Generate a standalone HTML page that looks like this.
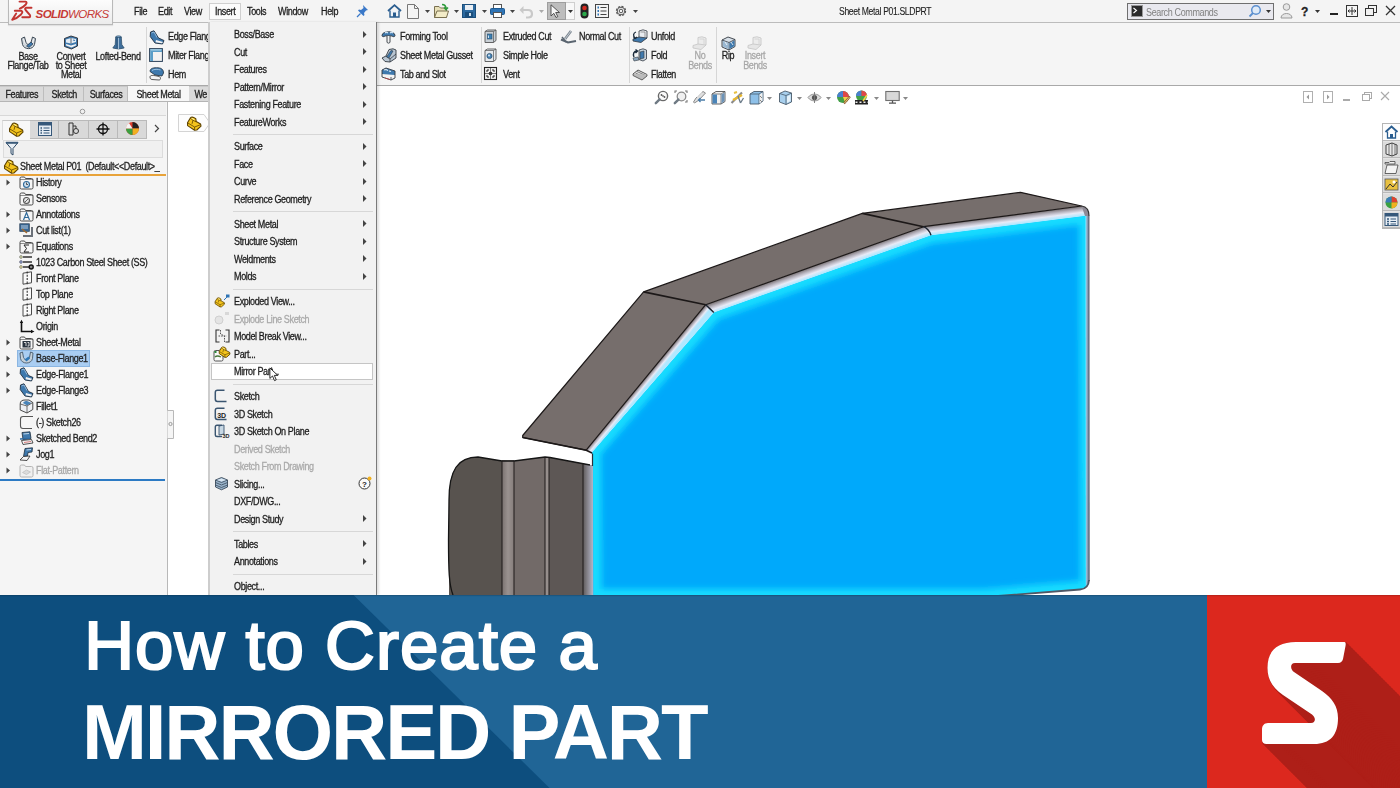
<!DOCTYPE html><html><head><meta charset="utf-8"><style>
html,body{margin:0;padding:0;}
body{width:1400px;height:788px;overflow:hidden;position:relative;background:#fff;font-family:"Liberation Sans", sans-serif;}
.t{position:absolute;white-space:nowrap;line-height:14px;height:14px;-webkit-text-stroke:0.28px currentColor;}
.s{transform:scaleX(0.9);transform-origin:0 50%;letter-spacing:-0.4px;}
.sc{transform:scaleX(0.9);transform-origin:50% 50%;letter-spacing:-0.4px;}
.b{position:absolute;box-sizing:border-box;}
svg{position:absolute;overflow:visible;}
</style></head><body>
<div class="b" style="left:0px;top:0px;width:1400px;height:23px;background:#f4f4f4;border-bottom:1px solid #bcbcbc;"></div>
<div class="b" style="left:0px;top:23px;width:1400px;height:63px;background:#f5f5f5;border-bottom:1px solid #a9a9a9;"></div>
<div class="b" style="left:167px;top:86px;width:1233px;height:509px;background:#ffffff;"></div>
<div class="b" style="left:0px;top:101px;width:168px;height:494px;background:#f5f5f5;border-right:1px solid #b8b8b8;"></div>
<div class="b" style="left:7.5px;top:-1px;width:105px;height:26px;background:linear-gradient(#fdfdfd,#ececec);border:1px solid #b9b9b9;border-top:none;box-shadow:0 1px 1px rgba(0,0,0,0.08);"></div>
<div class="t" style="left:35.5px;top:7.2px;font-size:11.6px;line-height:14px;color:#c63a36;font-style:italic;letter-spacing:-0.6px;-webkit-text-stroke:0;"><b>SOLID</b>WORKS</div>
<svg style="left:0px;top:0px" width="40" height="24" viewBox="0 0 40 24"><g stroke="#c23430" fill="none" stroke-linecap="round" stroke-linejoin="round"><path d="M19.5 1.6 L25.5 1.6 Q27.5 2 25.8 4.5 Q23.5 7 19.8 8.6" stroke-width="1.9"/><path d="M14.8 10.8 L21.5 10.8 Q23.5 11.5 21 14.5 Q17 18.5 12.2 19.8 L16.2 13.6" stroke-width="1.9"/><path d="M31.5 7.8 L25.8 7.8 Q24.5 8.3 25.6 10 L29.8 14.8 Q31 17 28.8 17.3 L22.3 17.3" stroke-width="1.9"/></g></svg>
<div class="b" style="left:208.5px;top:3px;width:32px;height:17px;background:#fbfbfb;border:1px solid #cfcfcf;"></div>
<div class="t s" style="left:133.5px;top:5.2px;font-size:10px;color:#1e1e1e;font-weight:normal;">File</div>
<div class="t s" style="left:158px;top:5.2px;font-size:10px;color:#1e1e1e;font-weight:normal;">Edit</div>
<div class="t s" style="left:184px;top:5.2px;font-size:10px;color:#1e1e1e;font-weight:normal;">View</div>
<div class="t s" style="left:214.5px;top:5.2px;font-size:10px;color:#1e1e1e;font-weight:normal;">Insert</div>
<div class="t s" style="left:247px;top:5.2px;font-size:10px;color:#1e1e1e;font-weight:normal;">Tools</div>
<div class="t s" style="left:278px;top:5.2px;font-size:10px;color:#1e1e1e;font-weight:normal;">Window</div>
<div class="t s" style="left:321px;top:5.2px;font-size:10px;color:#1e1e1e;font-weight:normal;">Help</div>
<svg style="left:356px;top:4px" width="13" height="14" viewBox="0 0 13 14"><path d="M7 1 L12 6 L10 6.5 L8 9 L8.5 11 L7.5 12 L2 6.5 L3 5.5 L5 6 L7.5 4 Z" fill="#3a78c8"/><path d="M4.5 9.5 L1 13" stroke="#3a78c8" stroke-width="1.3"/></svg>
<div class="t s" style="left:839px;top:5.0px;font-size:10px;color:#222;font-weight:normal;-webkit-text-stroke:0.1px #222;transform:scaleX(0.86);">Sheet Metal P01.SLDPRT</div>
<div class="b" style="left:1126.5px;top:3px;width:147px;height:17px;background:#e9e9ef;border:1px solid #6f6f6f;"></div>
<div class="b" style="left:1130.5px;top:5px;width:12px;height:12px;background:#2b2b2b;border:1px solid #999;"></div>
<svg style="left:1132px;top:7px" width="9" height="8"><path d="M1.5 1 L4.5 3.5 L1.5 6" stroke="#fff" stroke-width="1.1" fill="none"/></svg>
<div class="t s" style="left:1146px;top:5.5px;font-size:10px;color:#808080;font-weight:normal;-webkit-text-stroke:0;">Search Commands</div>
<svg style="left:1248px;top:4px" width="14" height="14" viewBox="0 0 14 14"><circle cx="8" cy="6" r="4.3" stroke="#5b8fcf" stroke-width="1.5" fill="#dfeaf7"/><path d="M5 9 L1.5 12.5" stroke="#5b8fcf" stroke-width="1.8"/></svg>
<svg style="left:1266px;top:10px" width="6" height="4"><path d="M0 0 H5 L2.5 3 Z" fill="#333"/></svg>
<svg style="left:1280px;top:2px" width="13" height="17" viewBox="0 0 13 17"><circle cx="6.5" cy="5" r="3.3" fill="#e6e6e6" stroke="#9a9a9a"/><path d="M1 16 C1 10 12 10 12 16 Z" fill="#e6e6e6" stroke="#9a9a9a"/></svg>
<div class="t " style="left:1301px;top:5.0px;font-size:12px;color:#222;font-weight:bold;">?</div>
<svg style="left:1315px;top:10px" width="6" height="4"><path d="M0 0 H5 L2.5 3 Z" fill="#333"/></svg>
<div class="b" style="left:1330px;top:13px;width:8px;height:2px;background:#222;"></div>
<div class="b" style="left:1346px;top:5px;width:12px;height:12px;border:1px solid #333;"></div>
<svg style="left:1347px;top:6px" width="10" height="10"><path d="M5 1 V9" stroke="#333"/><path d="M1.5 5 H8.5 M2.5 3.5 L1 5 L2.5 6.5 M7.5 3.5 L9 5 L7.5 6.5" stroke="#333" fill="none"/></svg>
<svg style="left:1365px;top:5px" width="12" height="12"><rect x="3.5" y="0.5" width="8" height="7" fill="none" stroke="#333"/><rect x="0.5" y="3.5" width="8" height="7" fill="#f1f1f1" stroke="#333"/></svg>
<svg style="left:1385px;top:5px" width="11" height="11"><path d="M1 1 L10 10 M10 1 L1 10" stroke="#333" stroke-width="1.3"/></svg>
<svg style="left:387px;top:4px" width="15" height="14" viewBox="0 0 15 14"><path d="M1 7 L7.5 1.2 L14 7" stroke="#2a5d8f" stroke-width="1.8" fill="none"/><path d="M3 6.5 V13 H12 V6.5" stroke="#2a5d8f" stroke-width="1.4" fill="#eef3f8"/><rect x="6" y="8.5" width="3" height="4.5" fill="#2a5d8f"/></svg>
<svg style="left:407px;top:4px" width="12" height="15" viewBox="0 0 12 15"><path d="M0.5 0.5 H7.5 L11.5 4.5 V14.5 H0.5 Z" fill="#f4f4f4" stroke="#777"/><path d="M7.5 0.5 V4.5 H11.5" fill="none" stroke="#777"/></svg>
<svg style="left:425px;top:10px" width="5" height="3"><path d="M0 0 H5 L2.5 3 Z" fill="#444"/></svg>
<svg style="left:434px;top:4px" width="15" height="14" viewBox="0 0 15 14"><path d="M0.5 2.5 H5 L6.5 4 H12.5 V13.5 H0.5 Z" fill="#e8e0b8" stroke="#7a7050"/><path d="M0.5 13.5 L3 7 H14.5 L12.5 13.5 Z" fill="#f3ecc8" stroke="#7a7050"/><path d="M8 0.5 C11 0.5 12 2 12 5 M10 3.5 L12 5.5 L14 3.5" stroke="#2e9a3a" stroke-width="1.6" fill="none"/></svg>
<svg style="left:454px;top:10px" width="5" height="3"><path d="M0 0 H5 L2.5 3 Z" fill="#444"/></svg>
<svg style="left:462px;top:4px" width="14" height="14" viewBox="0 0 14 14"><rect x="0.5" y="0.5" width="13" height="13" fill="#2d6aa0" stroke="#1c4f7c"/><rect x="3" y="1" width="8" height="5" fill="#e9eef3"/><rect x="3" y="8" width="8" height="5.5" fill="#1c4f7c"/><rect x="7" y="9" width="2" height="3" fill="#cfe0ef"/></svg>
<svg style="left:482px;top:10px" width="5" height="3"><path d="M0 0 H5 L2.5 3 Z" fill="#444"/></svg>
<svg style="left:490px;top:4px" width="15" height="14" viewBox="0 0 15 14"><rect x="3.5" y="0.5" width="8" height="4" fill="#fff" stroke="#555"/><rect x="0.5" y="4.5" width="14" height="6" rx="1" fill="#2f74b5" stroke="#1e5a92"/><rect x="3.5" y="8.5" width="8" height="5" fill="#fff" stroke="#555"/></svg>
<svg style="left:510px;top:10px" width="5" height="3"><path d="M0 0 H5 L2.5 3 Z" fill="#444"/></svg>
<svg style="left:519px;top:5px" width="14" height="13" viewBox="0 0 14 13"><path d="M2 5 H9 C12 5 13 7 13 9 C13 11 11.5 12.5 9 12.5 H7" stroke="#c9c9c9" stroke-width="2.2" fill="none"/><path d="M0.5 5 L4.5 1 V9 Z" fill="#c9c9c9"/></svg>
<svg style="left:539px;top:10px" width="5" height="3"><path d="M0 0 H5 L2.5 3 Z" fill="#aaa"/></svg>
<div class="b" style="left:546.5px;top:2px;width:28px;height:18px;background:#f8f8f8;border:1px solid #cfcfcf;"></div>
<div class="b" style="left:546.5px;top:2px;width:19px;height:18px;background:#bdbdbd;border:1px solid #9e9e9e;"></div>
<svg style="left:550px;top:4px" width="11" height="14" viewBox="0 0 11 14"><path d="M1 0.8 V12 L3.8 9.3 L6 13.5 L7.8 12.6 L5.7 8.5 L9.5 8.5 Z" fill="#f7f7f7" stroke="#444" stroke-width="0.9" stroke-linejoin="round"/></svg>
<svg style="left:567.5px;top:10px" width="5" height="3"><path d="M0 0 H5 L2.5 3 Z" fill="#333"/></svg>
<svg style="left:580px;top:3px" width="9" height="16" viewBox="0 0 9 16"><rect x="0.5" y="0.5" width="8" height="15" rx="4" fill="#222"/><circle cx="4.5" cy="5" r="2.3" fill="#d32c22"/><circle cx="4.5" cy="11" r="2.3" fill="#2aa84a"/></svg>
<svg style="left:595px;top:4px" width="14" height="14" viewBox="0 0 14 14"><rect x="0.5" y="0.5" width="13" height="13" fill="#f4f4f4" stroke="#444"/><path d="M2.5 3.5 H4 M2.5 7 H4 M2.5 10.5 H4" stroke="#2f74b5" stroke-width="1.8"/><path d="M5.5 3.5 H11.5 M5.5 7 H11.5 M5.5 10.5 H11.5" stroke="#444" stroke-width="1.2"/></svg>
<svg style="left:614px;top:4px" width="14" height="14" viewBox="0 0 14 14"><circle cx="7" cy="7" r="4.6" fill="none" stroke="#555" stroke-width="1.1" stroke-dasharray="2.2 1.4"/><circle cx="7" cy="7" r="3.8" fill="none" stroke="#555" stroke-width="1"/><circle cx="7" cy="7" r="1.8" fill="none" stroke="#555" stroke-width="1"/></svg>
<svg style="left:633px;top:10px" width="5" height="3"><path d="M0 0 H5 L2.5 3 Z" fill="#444"/></svg>
<svg style="left:20px;top:35.5px" width="17" height="15" viewBox="0 0 17 15"><path d="M1.5 2.5 L4.5 1 L6 6.5 C7 9 10 9 11 6.5 L12.5 1 L15.5 2.5 L14.5 8.5 C13 14 4 14 2.5 8.5 Z" fill="#d0d6dc" stroke="#3e4a56" stroke-width="1" stroke-linejoin="round"/><path d="M6.5 10 L11 6 L13 8 L9 11.5 Z" fill="#3f79ad" stroke="#1e2e3e" stroke-width="0.6"/><path d="M3.5 3 L5 7.5 M13.5 3 L12.5 7" stroke="#f8f8f8" stroke-width="0.8"/></svg>
<div class="t sc" style="left:-32px;width:120px;text-align:center;top:49.5px;font-size:10px;color:#1e1e1e;">Base</div>
<div class="t sc" style="left:-32px;width:120px;text-align:center;top:58.5px;font-size:10px;color:#1e1e1e;">Flange/Tab</div>
<svg style="left:63px;top:35px" width="16" height="15" viewBox="0 0 16 15"><path d="M1.5 3.5 L8 1 L14.5 3 V11 L8.5 14 L1.5 11.5 Z" fill="#3f79ad" stroke="#2a2e34" stroke-width="0.9" stroke-linejoin="round"/><path d="M3 4.5 L8 3 L13 4 V7 L8 8.5 L3 7.5 Z" fill="#e4ecf4"/><path d="M3 9 L8 10.5 L13 9 L13 10.5 L8.5 12.5 L3 10.5 Z" fill="#f2f2f2"/><path d="M8 3 V8.5" stroke="#2a2e34" stroke-width="0.7"/><path d="M10 5 L12 5.5" stroke="#3f79ad" stroke-width="1.2"/></svg>
<div class="t sc" style="left:11px;width:120px;text-align:center;top:49.5px;font-size:10px;color:#1e1e1e;">Convert</div>
<div class="t sc" style="left:11px;width:120px;text-align:center;top:58.5px;font-size:10px;color:#1e1e1e;">to Sheet</div>
<div class="t sc" style="left:11px;width:120px;text-align:center;top:67.5px;font-size:10px;color:#1e1e1e;">Metal</div>
<svg style="left:111.5px;top:35px" width="13" height="15" viewBox="0 0 13 15"><ellipse cx="6.5" cy="2" rx="2.8" ry="1.2" fill="#7aa4c8" stroke="#2a4a66" stroke-width="0.6"/><path d="M3.7 2 L3.2 9.5 L0.8 13 Q6.5 15 12.2 13 L9.8 9.5 L9.3 2 Q6.5 3.5 3.7 2 Z" fill="#3f6f9c" stroke="#2a4a66" stroke-width="0.7"/><path d="M6.5 3 V14" stroke="#b8d0e4" stroke-width="0.8"/><path d="M5 3 V13" stroke="#1e3a56" stroke-width="0.5"/></svg>
<div class="t sc" style="left:58px;width:120px;text-align:center;top:49.5px;font-size:10px;color:#1e1e1e;">Lofted-Bend</div>
<div class="b" style="left:146px;top:27px;width:1px;height:56px;background:#d6d6d6;"></div>
<svg style="left:149px;top:29.5px" width="16" height="15" viewBox="0 0 16 15"><path d="M1.5 2 L5 0.8 L9.5 8 L15 10.5 L13.5 14 L6 13 L1.2 6.5 Z" fill="#3f79ad" stroke="#1e2e3e" stroke-width="0.9" stroke-linejoin="round"/><path d="M2.5 3 L5 2 L8 7.5" stroke="#9cc0e0" stroke-width="0.9" fill="none"/><path d="M7 10 L14 12 L13 13.2 L6.5 12.3 Z" fill="#f4f4f4"/></svg>
<div class="t s" style="left:168px;top:30.3px;font-size:10px;color:#1e1e1e;font-weight:normal;">Edge Flange</div>
<svg style="left:149px;top:48px" width="14" height="14" viewBox="0 0 14 14"><rect x="0.6" y="0.6" width="12.8" height="12.8" fill="#f2f2f2" stroke="#2a4058" stroke-width="1"/><path d="M1.2 1.2 H13 V4 H4 V13 H1.2 Z" fill="#5a9ec8"/><path d="M2 2 H12" stroke="#c8e4f4" stroke-width="0.8"/></svg>
<div class="t s" style="left:168px;top:49.4px;font-size:10px;color:#1e1e1e;font-weight:normal;">Miter Flange</div>
<svg style="left:149px;top:66.5px" width="15" height="14" viewBox="0 0 15 14"><path d="M1 4.5 C1 1 5 0.5 9 0.8 C13 1 14.5 3 14.5 6 L13 9 L6 8 Z" fill="#3f79ad" stroke="#1e2e3e" stroke-width="0.8"/><path d="M3 3.5 C5 2 9 2 11.5 3" stroke="#a8cce8" stroke-width="0.9" fill="none"/><path d="M1 10 C1 8 4 8 10 9.5 C12 10 12 13 10 13 L3 12.5 C1.5 12.3 1 11.5 1 10 Z" fill="#f4f4f4" stroke="#333" stroke-width="0.8"/></svg>
<div class="t s" style="left:168px;top:68.3px;font-size:10px;color:#1e1e1e;font-weight:normal;">Hem</div>
<svg style="left:381px;top:29px" width="15" height="15" viewBox="0 0 15 15"><path d="M1 6.5 C1 1.5 14 1.5 14 6.5 C14 8 12 8 11 7 L9 6.8 H6 L4 7 C3 8 1 8 1 6.5 Z" fill="#3f79ad" stroke="#333a42" stroke-width="0.9"/><path d="M4 4 C5 3 6 3 7 4 M9 4 C10 3 11 3 12 4" stroke="#cfe2f2" stroke-width="1.2" fill="none"/><path d="M6 7 V13 C6 14.5 9 14.5 9 13 V7" fill="#f2f2f2" stroke="#333a42" stroke-width="0.9"/></svg>
<div class="t s" style="left:400px;top:30.3px;font-size:10px;color:#1e1e1e;font-weight:normal;">Forming Tool</div>
<svg style="left:381px;top:48px" width="16" height="15" viewBox="0 0 16 15"><path d="M1 10 L5 8 L8 1.5 L12 0.8 L15 2 V10 L9 14 L4 13.5 Z" fill="#b9c6d2" stroke="#333a42" stroke-width="0.9" stroke-linejoin="round"/><path d="M5 8 L9 11 L15 6 M9 11 V14" stroke="#333a42" stroke-width="0.8" fill="none"/><path d="M5.5 9 L10 2.5 L12 3 L8 10 Z" fill="#3f79ad" stroke="#333a42" stroke-width="0.6"/></svg>
<div class="t s" style="left:400px;top:49.4px;font-size:10px;color:#1e1e1e;font-weight:normal;">Sheet Metal Gusset</div>
<svg style="left:381px;top:67px" width="15" height="14" viewBox="0 0 15 14"><path d="M1 3 L5 1 L14 4 V8 L10 10 L1 7 Z" fill="#3f79ad" stroke="#333a42" stroke-width="0.9" stroke-linejoin="round"/><path d="M3 3 L5 2.5 L7 3.5 M8 4 L10 4.5" stroke="#e8f0f8" stroke-width="1.1" fill="none"/><path d="M1 7 V10 L10 13 L14 11 V8" fill="#f4f4f4" stroke="#333a42" stroke-width="0.9"/><path d="M10 10 V13" stroke="#333a42" stroke-width="0.8"/><path d="M4 11 L9 12.5" stroke="#c04040" stroke-width="0.8"/></svg>
<div class="t s" style="left:400px;top:68.3px;font-size:10px;color:#1e1e1e;font-weight:normal;">Tab and Slot</div>
<div class="b" style="left:481px;top:27px;width:1px;height:56px;background:#d6d6d6;"></div>
<svg style="left:484px;top:29px" width="13" height="14" viewBox="0 0 13 14"><path d="M1 2.5 L3.5 1 H12 V11.5 L9.5 13.5 H1 Z" fill="#c9d0d6" stroke="#555" stroke-width="0.9" stroke-linejoin="round"/><path d="M1 2.5 H9.5 V13.5 M9.5 2.5 L12 1" stroke="#555" stroke-width="0.7" fill="none"/><rect x="3.5" y="5" width="4.5" height="5" fill="#3a7fb4" stroke="#2a4a66" stroke-width="0.6"/><path d="M4.5 6.5 V9" stroke="#e0eef8" stroke-width="0.9"/></svg>
<div class="t s" style="left:502.5px;top:30.3px;font-size:10px;color:#1e1e1e;font-weight:normal;">Extruded Cut</div>
<svg style="left:484px;top:48px" width="13" height="14" viewBox="0 0 13 14"><path d="M1 2.5 L3.5 1 H12 V11.5 L9.5 13.5 H1 Z" fill="#e6eaee" stroke="#555" stroke-width="0.9" stroke-linejoin="round"/><path d="M1 2.5 H9.5 V13.5 M9.5 2.5 L12 1" stroke="#555" stroke-width="0.7" fill="none"/><circle cx="5.5" cy="8" r="2.6" fill="#4a86b8" stroke="#2a4a66" stroke-width="0.7"/><circle cx="5" cy="7.5" r="0.9" fill="#e8f2fa"/></svg>
<div class="t s" style="left:502.5px;top:49.4px;font-size:10px;color:#1e1e1e;font-weight:normal;">Simple Hole</div>
<svg style="left:484px;top:67px" width="13" height="13" viewBox="0 0 13 13"><rect x="0.5" y="0.5" width="12" height="12" fill="#f0f0f0" stroke="#222" stroke-width="1.1"/><path d="M3 3 H5 M8 3 H10 M3 10 H5 M8 10 H10 M3 3 V5 M10 3 V5 M3 8 V10 M10 8 V10" stroke="#222" stroke-width="1"/><circle cx="6.5" cy="6.5" r="1.8" fill="#222"/><path d="M6.5 1 V12 M1 6.5 H12" stroke="#444" stroke-width="0.7"/></svg>
<div class="t s" style="left:502.5px;top:68.3px;font-size:10px;color:#1e1e1e;font-weight:normal;">Vent</div>
<svg style="left:560px;top:30px" width="17" height="14" viewBox="0 0 17 14"><path d="M11 1 L5 9" stroke="#7a8590" stroke-width="2.6"/><path d="M11 1 L5 9" stroke="#c5ccd2" stroke-width="1"/><path d="M1 9.5 L8 12.5 L16 11" stroke="#5a6570" stroke-width="2" fill="none"/><path d="M2 7 L6 12" stroke="#5a6570" stroke-width="1.5"/></svg>
<div class="t s" style="left:579px;top:30.3px;font-size:10px;color:#1e1e1e;font-weight:normal;">Normal Cut</div>
<div class="b" style="left:629px;top:27px;width:1px;height:56px;background:#d6d6d6;"></div>
<svg style="left:632px;top:29px" width="16" height="15" viewBox="0 0 16 15"><path d="M7 2 L11 0.8 L15 2 V9 L11 10.5 L7 9 Z" fill="#e8ecf0" stroke="#333a42" stroke-width="0.8"/><path d="M8.5 3 H13 V8" stroke="#777" stroke-width="0.7" fill="none"/><path d="M1 10 L7 8 L15 9 L9 13.5 L1 12 Z" fill="#3f79ad" stroke="#333a42" stroke-width="0.8"/><path d="M4 3 C1 4 1 7 3 9 M1.5 7.5 L3 9.5 L5 8" stroke="#1a2a3a" stroke-width="1.3" fill="none"/></svg>
<div class="t s" style="left:651px;top:30.3px;font-size:10px;color:#1e1e1e;font-weight:normal;">Unfold</div>
<svg style="left:632px;top:48px" width="15" height="15" viewBox="0 0 15 15"><path d="M7 2 L11 0.8 L14.5 2 V11 L11 13 L7 11.5 Z" fill="#c6d2dc" stroke="#333a42" stroke-width="0.8"/><path d="M8 4 L12 3 V10 L8 11 Z" fill="#3f79ad" stroke="#333a42" stroke-width="0.6"/><path d="M2 9 C0.5 6 2 3 5 3 M3.5 1.5 L5.5 3 L3.5 5" stroke="#1a2a3a" stroke-width="1.4" fill="none"/><path d="M1 10 L6 9 L7 12 L2 13 Z" fill="#8aa4bc" stroke="#333a42" stroke-width="0.6"/></svg>
<div class="t s" style="left:651px;top:49.4px;font-size:10px;color:#1e1e1e;font-weight:normal;">Fold</div>
<svg style="left:632px;top:69px" width="16" height="11" viewBox="0 0 16 11"><path d="M1 5 L6 1 L15 5.5 L10 10 Z" fill="#e4e4e4" stroke="#444" stroke-width="0.9" stroke-linejoin="round"/><path d="M3.5 4 L12 8 M5 2.5 L13.5 6.5" stroke="#666" stroke-width="0.8"/><path d="M1 5 V6.5 L10 11 L15 7 V5.5" fill="#bbb" stroke="#444" stroke-width="0.8"/></svg>
<div class="t s" style="left:651px;top:68.3px;font-size:10px;color:#1e1e1e;font-weight:normal;">Flatten</div>
<svg style="left:692px;top:36px" width="15" height="15" viewBox="0 0 15 15"><path d="M6 1.5 L10 0.8 L14 2 V9 L10 10.5 L6 9 Z" fill="#ececec" stroke="#c8c8c8" stroke-width="0.9"/><path d="M1 9.5 L6 8 L14 9 L9 13.5 L1 12 Z" fill="#e6e6e6" stroke="#c8c8c8" stroke-width="0.9"/><path d="M7.5 3 H12 V8" stroke="#d0d0d0" stroke-width="0.8" fill="none"/></svg>
<div class="t sc" style="left:639.5px;width:120px;text-align:center;top:49.4px;font-size:10px;color:#a8a8a8;">No</div>
<div class="t sc" style="left:639.5px;width:120px;text-align:center;top:58.5px;font-size:10px;color:#a8a8a8;">Bends</div>
<div class="b" style="left:716px;top:27px;width:1px;height:56px;background:#d6d6d6;"></div>
<svg style="left:721px;top:36px" width="15" height="15" viewBox="0 0 15 15"><path d="M1 4 L7 1 L14 3.5 V10.5 L8 14 L1 11 Z" fill="#d8e0e8" stroke="#333a42" stroke-width="0.9" stroke-linejoin="round"/><path d="M1 4 L8 6.5 L14 3.5 M8 6.5 V14" stroke="#333a42" stroke-width="0.8" fill="none"/><path d="M8.5 7 L13.5 4.5 V10 L8.5 13 Z" fill="#3f79ad"/><path d="M2 5 L7.5 7 V13 L2 10.5 Z" fill="#9ab8d2"/><path d="M4 6 L6 9 M10 6 L12 9" stroke="#fff" stroke-width="0.8"/></svg>
<div class="t sc" style="left:668px;width:120px;text-align:center;top:49.4px;font-size:10px;color:#1e1e1e;">Rip</div>
<svg style="left:747px;top:36px" width="15" height="15" viewBox="0 0 15 15"><path d="M6 1.5 L10 0.8 L14 2 V9 L10 10.5 L6 9 Z" fill="#ececec" stroke="#c8c8c8" stroke-width="0.9"/><path d="M1 9.5 L6 8 L14 9 L9 13.5 L1 12 Z" fill="#e6e6e6" stroke="#c8c8c8" stroke-width="0.9"/><path d="M7.5 3 H12 V8" stroke="#d0d0d0" stroke-width="0.8" fill="none"/></svg>
<div class="t sc" style="left:694.5px;width:120px;text-align:center;top:49.4px;font-size:10px;color:#a8a8a8;">Insert</div>
<div class="t sc" style="left:694.5px;width:120px;text-align:center;top:58.5px;font-size:10px;color:#a8a8a8;">Bends</div>
<div class="b" style="left:0px;top:85.5px;width:43.5px;height:15.5px;background:#dadada;border-right:1px solid #bdbdbd;border-top:1px solid #c9c9c9;overflow:hidden;"><div class="t sc" style="left:0;width:43.5px;text-align:center;top:1px;font-size:10px;color:#222;">Features</div></div>
<div class="b" style="left:43.5px;top:85.5px;width:40.5px;height:15.5px;background:#dadada;border-right:1px solid #bdbdbd;border-top:1px solid #c9c9c9;overflow:hidden;"><div class="t sc" style="left:0;width:40.5px;text-align:center;top:1px;font-size:10px;color:#222;">Sketch</div></div>
<div class="b" style="left:84px;top:85.5px;width:44px;height:15.5px;background:#dadada;border-right:1px solid #bdbdbd;border-top:1px solid #c9c9c9;overflow:hidden;"><div class="t sc" style="left:0;width:44px;text-align:center;top:1px;font-size:10px;color:#222;">Surfaces</div></div>
<div class="b" style="left:128px;top:85.5px;width:61px;height:15.5px;background:#f7f7f7;border-top:1px solid #f7f7f7;overflow:hidden;"><div class="t sc" style="left:0;width:61px;text-align:center;top:1px;font-size:10px;color:#222;">Sheet Metal</div></div>
<div class="b" style="left:189px;top:85.5px;width:26px;height:15.5px;background:#dadada;border-right:1px solid #bdbdbd;border-top:1px solid #c9c9c9;overflow:hidden;"><div class="t s" style="left:0;width:60px;text-align:left;padding-left:6px;top:1px;font-size:10px;color:#222;">We</div></div>
<div class="b" style="left:0px;top:100.5px;width:209px;height:1px;background:#b5b5b5;"></div>
<div class="b" style="left:0px;top:102px;width:166px;height:14px;background:#f0f0f0;border-bottom:1px solid #d8d8d8;"></div>
<svg style="left:79px;top:108px" width="7" height="7"><circle cx="3.5" cy="3.5" r="2.3" fill="none" stroke="#9a9a9a" stroke-width="1"/></svg>
<div class="b" style="left:0px;top:118.5px;width:166px;height:20.5px;background:#f5f5f5;"></div>
<div class="b" style="left:2px;top:119.5px;width:28px;height:20px;background:#f8f8f8;border-top:1px solid #c8c8c8;border-left:1px solid #ddd;"></div>
<div class="b" style="left:30px;top:119.5px;width:29px;height:19.5px;background:#d9d9d9;border:1px solid #b9b9b9;border-left:none;"></div>
<div class="b" style="left:59px;top:119.5px;width:29.5px;height:19.5px;background:#d9d9d9;border:1px solid #b9b9b9;border-left:none;"></div>
<div class="b" style="left:88.5px;top:119.5px;width:29.0px;height:19.5px;background:#d9d9d9;border:1px solid #b9b9b9;border-left:none;"></div>
<div class="b" style="left:117.5px;top:119.5px;width:29.0px;height:19.5px;background:#d9d9d9;border:1px solid #b9b9b9;border-left:none;"></div>
<svg style="left:8px;top:122px" width="17" height="15" viewBox="0 0 17 15"><path d="M1.5 6.8 L4.2 2.2 Q5.5 0.6 7.6 1.4 L9.8 2.8 L10.2 5.6 L14.6 8 L15 10.2 L10.8 14 L8.6 14.2 L1.6 9.6 Z" fill="#f4c41c" stroke="#5e4300" stroke-width="1.1" stroke-linejoin="round"/><path d="M1.5 6.8 L8.6 11 L14.8 8.6 M8.6 11 V14.2 M4.2 2.2 L7 4.2 L10 5.8 M7 4.2 L6 7.8" stroke="#5e4300" stroke-width="0.8" fill="none"/><path d="M5.5 2.2 L8.5 3.8" stroke="#fff4a0" stroke-width="1"/></svg>
<svg style="left:38px;top:122px" width="14" height="14" viewBox="0 0 14 14"><rect x="0.5" y="0.5" width="13" height="13" fill="#e6edf4" stroke="#36587a"/><rect x="0.5" y="0.5" width="13" height="3" fill="#36587a"/><path d="M2.5 6 H4 M2.5 8.5 H4 M2.5 11 H4" stroke="#36587a" stroke-width="1.5"/><path d="M5.5 6 H11.5 M5.5 8.5 H11.5 M5.5 11 H11.5" stroke="#36587a" stroke-width="1"/></svg>
<svg style="left:68px;top:122px" width="12" height="14" viewBox="0 0 12 14"><path d="M1 1 H5 V13 H1 Z" fill="none" stroke="#333"/><circle cx="8" cy="9" r="2.5" fill="none" stroke="#333"/><path d="M5 4 H8 V6.5" stroke="#333" fill="none"/></svg>
<svg style="left:96px;top:122px" width="14" height="14" viewBox="0 0 14 14"><circle cx="7" cy="7" r="4.5" fill="none" stroke="#111" stroke-width="1.3"/><path d="M7 0.5 V13.5 M0.5 7 H13.5" stroke="#111" stroke-width="1.3"/></svg>
<svg style="left:125px;top:121px" width="15" height="15" viewBox="0 0 15 15"><circle cx="7.5" cy="7.5" r="6.5" fill="#e04030"/><path d="M7.5 7.5 L7.5 1 A6.5 6.5 0 0 1 14 7.5 Z" fill="#222"/><path d="M7.5 7.5 L14 7.5 A6.5 6.5 0 0 1 7.5 14 Z" fill="#f0b020"/><path d="M7.5 7.5 L7.5 14 A6.5 6.5 0 0 1 1 7.5 Z" fill="#3aa040"/><path d="M7.5 7.5 L1 7.5 A6.5 6.5 0 0 1 4 2 Z" fill="#f4f4f4"/></svg>
<svg style="left:154px;top:124px" width="6" height="9"><path d="M1 1 L4.5 4.5 L1 8" stroke="#444" stroke-width="1.2" fill="none"/></svg>
<div class="b" style="left:3px;top:139.5px;width:160px;height:18px;background:#f0f0f0;border:1px solid #dcdcdc;"></div>
<svg style="left:5px;top:141px" width="14" height="15" viewBox="0 0 14 15"><path d="M1 1.5 H13 L8 7.5 V14 L6 12.5 V7.5 Z" fill="#e8eef4" stroke="#2e4a66" stroke-width="1" stroke-linejoin="round"/><path d="M1 1.8 H13" stroke="#3a5a7a" stroke-width="2"/></svg>
<svg style="left:3px;top:159px" width="17" height="15" viewBox="0 0 17 15"><path d="M1.5 6.8 L4.2 2.2 Q5.5 0.6 7.6 1.4 L9.8 2.8 L10.2 5.6 L14.6 8 L15 10.2 L10.8 14 L8.6 14.2 L1.6 9.6 Z" fill="#f4c41c" stroke="#5e4300" stroke-width="1.1" stroke-linejoin="round"/><path d="M1.5 6.8 L8.6 11 L14.8 8.6 M8.6 11 V14.2 M4.2 2.2 L7 4.2 L10 5.8 M7 4.2 L6 7.8" stroke="#5e4300" stroke-width="0.8" fill="none"/><path d="M5.5 2.2 L8.5 3.8" stroke="#fff4a0" stroke-width="1"/></svg>
<div class="t s" style="left:20px;top:160.0px;font-size:10px;color:#222;font-weight:normal;">Sheet Metal P01&nbsp; (Default&lt;&lt;Default&gt;_</div>
<div class="b" style="left:0px;top:174px;width:166px;height:2px;background:#e8a33a;"></div>
<svg style="left:6px;top:178.5px" width="5" height="7"><path d="M0.5 0.5 L4 3.5 L0.5 6.5 Z" fill="#444"/></svg>
<svg style="left:19px;top:176px" width="15" height="14" viewBox="0 0 15 14"><path d="M1 2.5 Q1 1 2.5 1 H5.5 L6.5 2.5 H12.5 Q14 2.5 14 4 V11.5 Q14 13 12.5 13 H2.5 Q1 13 1 11.5 Z" fill="#f6f6f6" stroke="#4a4a4a" stroke-width="1"/><path d="M1 3.5 H14" stroke="#4a4a4a" stroke-width="0.6"/><circle cx="7.5" cy="8.5" r="3" fill="#cfe0ee" stroke="#2f6a9a" stroke-width="1.1"/><path d="M7.5 6.5 V8.5 H9" stroke="#333" stroke-width="0.8" fill="none"/></svg>
<div class="t s" style="left:36px;top:176.0px;font-size:10px;color:#222;font-weight:normal;">History</div>
<svg style="left:19px;top:192px" width="15" height="14" viewBox="0 0 15 14"><path d="M1 2.5 Q1 1 2.5 1 H5.5 L6.5 2.5 H12.5 Q14 2.5 14 4 V11.5 Q14 13 12.5 13 H2.5 Q1 13 1 11.5 Z" fill="#f6f6f6" stroke="#4a4a4a" stroke-width="1"/><path d="M1 3.5 H14" stroke="#4a4a4a" stroke-width="0.6"/><circle cx="7.5" cy="8.5" r="3" fill="#e8e8e8" stroke="#555" stroke-width="1.1"/><path d="M6 10 L9 7" stroke="#555" stroke-width="0.9"/></svg>
<div class="t s" style="left:36px;top:192.0px;font-size:10px;color:#222;font-weight:normal;">Sensors</div>
<svg style="left:6px;top:210.5px" width="5" height="7"><path d="M0.5 0.5 L4 3.5 L0.5 6.5 Z" fill="#444"/></svg>
<svg style="left:19px;top:208px" width="15" height="14" viewBox="0 0 15 14"><path d="M1 2.5 Q1 1 2.5 1 H5.5 L6.5 2.5 H12.5 Q14 2.5 14 4 V11.5 Q14 13 12.5 13 H2.5 Q1 13 1 11.5 Z" fill="#f6f6f6" stroke="#4a4a4a" stroke-width="1"/><path d="M1 3.5 H14" stroke="#4a4a4a" stroke-width="0.6"/><path d="M4.5 12 L7.5 4.5 L10.5 12 M5.7 9.5 H9.3" stroke="#2f6a9a" stroke-width="1.2" fill="none"/></svg>
<div class="t s" style="left:36px;top:208.0px;font-size:10px;color:#222;font-weight:normal;">Annotations</div>
<svg style="left:6px;top:226.5px" width="5" height="7"><path d="M0.5 0.5 L4 3.5 L0.5 6.5 Z" fill="#444"/></svg>
<svg style="left:19px;top:223px" width="15" height="15" viewBox="0 0 15 15"><rect x="0.8" y="0.8" width="9.5" height="7.5" fill="#3a6a98" stroke="#2a4058" stroke-width="0.8"/><path d="M2 3 H9 M2 5 H9" stroke="#d8e6f2" stroke-width="0.8"/><path d="M3 6 L8 10" stroke="#a06a30" stroke-width="1.6"/><path d="M13 4 V13 H4" stroke="#6a7078" stroke-width="2" fill="none"/></svg>
<div class="t s" style="left:36px;top:224.0px;font-size:10px;color:#222;font-weight:normal;">Cut list(1)</div>
<svg style="left:6px;top:242.5px" width="5" height="7"><path d="M0.5 0.5 L4 3.5 L0.5 6.5 Z" fill="#444"/></svg>
<svg style="left:19px;top:240px" width="15" height="14" viewBox="0 0 15 14"><path d="M1 2.5 Q1 1 2.5 1 H5.5 L6.5 2.5 H12.5 Q14 2.5 14 4 V11.5 Q14 13 12.5 13 H2.5 Q1 13 1 11.5 Z" fill="#f6f6f6" stroke="#4a4a4a" stroke-width="1"/><path d="M1 3.5 H14" stroke="#4a4a4a" stroke-width="0.6"/><path d="M10 5 H5 L7.5 8.5 L5 12 H10" stroke="#222" stroke-width="1" fill="none"/></svg>
<div class="t s" style="left:36px;top:240.0px;font-size:10px;color:#222;font-weight:normal;">Equations</div>
<svg style="left:19px;top:255px" width="15" height="15" viewBox="0 0 15 15"><path d="M4 2 H13 M4 7 H13 M4 12 H10" stroke="#333" stroke-width="1.3"/><circle cx="2" cy="2" r="1.4" fill="#d0d8a0" stroke="#666" stroke-width="0.6"/><circle cx="2" cy="7" r="1.4" fill="#8a9ac8" stroke="#556" stroke-width="0.6"/><circle cx="2" cy="12" r="1.4" fill="#e0d890" stroke="#666" stroke-width="0.6"/><circle cx="12.2" cy="12" r="2" fill="#888" stroke="#111" stroke-width="1.4"/></svg>
<div class="t s" style="left:36px;top:256.0px;font-size:10px;color:#222;font-weight:normal;">1023 Carbon Steel Sheet (SS)</div>
<svg style="left:19px;top:271px" width="14" height="15" viewBox="0 0 14 15"><path d="M4 2.2 L12.5 0.8 V11.8 L4 13.2 Z" fill="#fafafa" stroke="#4a4a4a" stroke-width="1"/><path d="M8.2 0.5 V14" stroke="#333" stroke-width="1.1" stroke-dasharray="2 1.3"/></svg>
<div class="t s" style="left:36px;top:272.0px;font-size:10px;color:#222;font-weight:normal;">Front Plane</div>
<svg style="left:19px;top:287px" width="14" height="15" viewBox="0 0 14 15"><path d="M4 2.2 L12.5 0.8 V11.8 L4 13.2 Z" fill="#fafafa" stroke="#4a4a4a" stroke-width="1"/><path d="M8.2 0.5 V14" stroke="#333" stroke-width="1.1" stroke-dasharray="2 1.3"/></svg>
<div class="t s" style="left:36px;top:288.0px;font-size:10px;color:#222;font-weight:normal;">Top Plane</div>
<svg style="left:19px;top:303px" width="14" height="15" viewBox="0 0 14 15"><path d="M4 2.2 L12.5 0.8 V11.8 L4 13.2 Z" fill="#fafafa" stroke="#4a4a4a" stroke-width="1"/><path d="M8.2 0.5 V14" stroke="#333" stroke-width="1.1" stroke-dasharray="2 1.3"/></svg>
<div class="t s" style="left:36px;top:304.0px;font-size:10px;color:#222;font-weight:normal;">Right Plane</div>
<svg style="left:19px;top:319px" width="16" height="15" viewBox="0 0 16 15"><path d="M2.5 3 V12.5 H13" stroke="#111" stroke-width="1.6" fill="none"/><path d="M0.8 4 L2.5 0.8 L4.2 4 Z M12 10.8 L15.5 12.5 L12 14.2 Z" fill="#111"/></svg>
<div class="t s" style="left:36px;top:320.0px;font-size:10px;color:#222;font-weight:normal;">Origin</div>
<svg style="left:6px;top:338.5px" width="5" height="7"><path d="M0.5 0.5 L4 3.5 L0.5 6.5 Z" fill="#444"/></svg>
<svg style="left:19px;top:336px" width="15" height="14" viewBox="0 0 15 14"><path d="M1 2.5 Q1 1 2.5 1 H5.5 L6.5 2.5 H12.5 Q14 2.5 14 4 V11.5 Q14 13 12.5 13 H2.5 Q1 13 1 11.5 Z" fill="#f6f6f6" stroke="#4a4a4a" stroke-width="1"/><path d="M1 3.5 H14" stroke="#4a4a4a" stroke-width="0.6"/><rect x="3.5" y="5" width="8" height="6.5" fill="#2a3440"/><path d="M5 6.5 H7 V10 M8.5 6.5 H10 V10 H8.5" stroke="#e8e8e8" stroke-width="0.9" fill="none"/></svg>
<div class="t s" style="left:36px;top:336.0px;font-size:10px;color:#222;font-weight:normal;">Sheet-Metal</div>
<svg style="left:6px;top:354.5px" width="5" height="7"><path d="M0.5 0.5 L4 3.5 L0.5 6.5 Z" fill="#444"/></svg>
<div class="b" style="left:17px;top:349.5px;width:73px;height:17px;background:#a9cdf2;border:1px solid #8bb6e2;"></div>
<svg style="left:19px;top:351px" width="15" height="14" viewBox="0 0 15 14"><path d="M1 2 L3.5 1 L4.5 6.5 C5.5 9.5 9.5 9.5 10.5 6.5 L11.5 1 L14 2 L13.5 7.5 C12.5 13.5 2.5 13.5 1.5 7.5 Z" fill="#c4cfd8" stroke="#46596b" stroke-width="0.9"/><path d="M5.5 8.5 L9.5 5.5 L11 7.5 L7.5 10.5 Z" fill="#2f78b8"/></svg>
<div class="t s" style="left:36px;top:352.0px;font-size:10px;color:#222;font-weight:normal;">Base-Flange1</div>
<svg style="left:6px;top:370.5px" width="5" height="7"><path d="M0.5 0.5 L4 3.5 L0.5 6.5 Z" fill="#444"/></svg>
<svg style="left:19px;top:367px" width="15" height="15" viewBox="0 0 15 15"><path d="M1.5 2 L5 0.8 L9.5 8.5 L14 10.5 L12.5 14 L6 13 L1.2 6.5 Z" fill="#3f79ad" stroke="#1e2e3e" stroke-width="0.9" stroke-linejoin="round"/><path d="M2.5 3 L5 2 L8 7.5" stroke="#9cc0e0" stroke-width="0.9" fill="none"/><path d="M7 10 L13 11.8 L12 13.2 L6.5 12.3 Z" fill="#f4f4f4"/></svg>
<div class="t s" style="left:36px;top:368.0px;font-size:10px;color:#222;font-weight:normal;">Edge-Flange1</div>
<svg style="left:6px;top:386.5px" width="5" height="7"><path d="M0.5 0.5 L4 3.5 L0.5 6.5 Z" fill="#444"/></svg>
<svg style="left:19px;top:383px" width="15" height="15" viewBox="0 0 15 15"><path d="M1.5 2 L5 0.8 L9.5 8.5 L14 10.5 L12.5 14 L6 13 L1.2 6.5 Z" fill="#3f79ad" stroke="#1e2e3e" stroke-width="0.9" stroke-linejoin="round"/><path d="M2.5 3 L5 2 L8 7.5" stroke="#9cc0e0" stroke-width="0.9" fill="none"/><path d="M7 10 L13 11.8 L12 13.2 L6.5 12.3 Z" fill="#f4f4f4"/></svg>
<div class="t s" style="left:36px;top:384.0px;font-size:10px;color:#222;font-weight:normal;">Edge-Flange3</div>
<svg style="left:19px;top:399px" width="15" height="15" viewBox="0 0 15 15"><path d="M1.2 5 C1.2 2 3 1 6 1 H10 L13.8 3.5 V10.5 L8 14 L1.2 11 Z" fill="#eef0f4" stroke="#4a4a4a" stroke-width="1" stroke-linejoin="round"/><path d="M4 4 C5 2.5 6 2 8 2 L12.5 4 L8 6.5 Z" fill="#4a84b8"/><path d="M1.2 5 L8 7 L13.8 3.5 M8 7 V14" stroke="#4a4a4a" stroke-width="0.8" fill="none"/></svg>
<div class="t s" style="left:36px;top:400.0px;font-size:10px;color:#222;font-weight:normal;">Fillet1</div>
<svg style="left:19px;top:415px" width="15" height="15" viewBox="0 0 15 15"><path d="M14 1.5 H4 Q1.5 1.5 1.5 4 V11 Q1.5 13.5 4 13.5 H13" stroke="#555" stroke-width="1.1" fill="none"/></svg>
<div class="t s" style="left:36px;top:416.0px;font-size:10px;color:#222;font-weight:normal;">(-) Sketch26</div>
<svg style="left:6px;top:434.5px" width="5" height="7"><path d="M0.5 0.5 L4 3.5 L0.5 6.5 Z" fill="#444"/></svg>
<svg style="left:19px;top:431px" width="15" height="15" viewBox="0 0 15 15"><path d="M3 1.5 L11 0.8 L12 7.5 L4 8.5 Z" fill="#3f79ad" stroke="#1e2e3e" stroke-width="0.8"/><path d="M4.5 3 L10 2.5" stroke="#cfe2f2" stroke-width="0.9"/><path d="M1 8 L11 7.5" stroke="#2f6aa0" stroke-width="1.4"/><path d="M2.5 9.5 L12.5 8.5 L14 12 L4 13.5 Z" fill="#f4f4f4" stroke="#2a2a2a" stroke-width="0.8"/><path d="M5 11.5 L12 10.5" stroke="#d06060" stroke-width="0.8"/></svg>
<div class="t s" style="left:36px;top:432.0px;font-size:10px;color:#222;font-weight:normal;">Sketched Bend2</div>
<svg style="left:6px;top:450.5px" width="5" height="7"><path d="M0.5 0.5 L4 3.5 L0.5 6.5 Z" fill="#444"/></svg>
<svg style="left:19px;top:447px" width="15" height="15" viewBox="0 0 15 15"><path d="M6 1.5 L13.5 0.8 L13 5 L9 5.5 L8.5 9 L4.5 9.5 Z" fill="#3f79ad" stroke="#1e2e3e" stroke-width="0.8"/><path d="M7.5 3 L12 2.5" stroke="#cfe2f2" stroke-width="0.9"/><path d="M1 13 L4.5 9.5 L11 9 L8 13.5 Z" fill="#f4f4f4" stroke="#2a2a2a" stroke-width="0.8"/></svg>
<div class="t s" style="left:36px;top:448.0px;font-size:10px;color:#222;font-weight:normal;">Jog1</div>
<svg style="left:6px;top:466.5px" width="5" height="7"><path d="M0.5 0.5 L4 3.5 L0.5 6.5 Z" fill="#444"/></svg>
<svg style="left:19px;top:464px" width="15" height="14" viewBox="0 0 15 14"><path d="M1 2.5 Q1 1 2.5 1 H5.5 L6.5 2.5 H12.5 Q14 2.5 14 4 V11.5 Q14 13 12.5 13 H2.5 Q1 13 1 11.5 Z" fill="#f0f0f0" stroke="#b4b4b4" stroke-width="1"/><path d="M3.5 8.5 L7.5 6 L11.5 8 L7.5 10.5 Z" fill="#dcdcdc" stroke="#bcbcbc" stroke-width="0.7"/></svg>
<div class="t s" style="left:36px;top:464.0px;font-size:10px;color:#a8a8a8;font-weight:normal;">Flat-Pattern</div>
<div class="b" style="left:0px;top:478.5px;width:165px;height:2.5px;background:#2c7ac4;"></div>
<svg style="left:166.5px;top:410px" width="8" height="29"><path d="M0.5 0.5 H6.5 V28.5 H0.5" fill="#f5f5f5" stroke="#b8b8b8"/><circle cx="3.5" cy="14" r="1.6" fill="none" stroke="#999" stroke-width="1"/></svg>
<svg style="left:178px;top:114px" width="34" height="18" viewBox="0 0 34 18"><path d="M0.5 0.5 H26 L32 9 L26 17.5 H0.5 Z" fill="#fdfdfd" stroke="#d4d4d4"/><g transform="translate(8,2)"><path d="M1.5 6.8 L4.2 2.2 Q5.5 0.6 7.6 1.4 L9.8 2.8 L10.2 5.6 L14.6 8 L15 10.2 L10.8 14 L8.6 14.2 L1.6 9.6 Z" fill="#f4c41c" stroke="#5e4300" stroke-width="1.1" stroke-linejoin="round"/><path d="M1.5 6.8 L8.6 11 L14.8 8.6 M8.6 11 V14.2 M4.2 2.2 L7 4.2 L10 5.8 M7 4.2 L6 7.8" stroke="#5e4300" stroke-width="0.8" fill="none"/><path d="M5.5 2.2 L8.5 3.8" stroke="#fff4a0" stroke-width="1"/></g></svg>
<div class="b" style="left:208px;top:22px;width:168.5px;height:573px;background:#f2f2f2;border-left:2px solid #cdcdcd;border-right:1px solid #7a7a7a;box-shadow:2px 0 2px rgba(0,0,0,0.12);"></div>
<div class="t s" style="left:233.5px;top:28.0px;font-size:10px;color:#1e1e1e;font-weight:normal;">Boss/Base</div>
<svg style="left:363px;top:30.5px" width="4" height="7"><path d="M0 0 L3.5 3.5 L0 7 Z" fill="#444"/></svg>
<div class="t s" style="left:233.5px;top:45.5px;font-size:10px;color:#1e1e1e;font-weight:normal;">Cut</div>
<svg style="left:363px;top:48.0px" width="4" height="7"><path d="M0 0 L3.5 3.5 L0 7 Z" fill="#444"/></svg>
<div class="t s" style="left:233.5px;top:63.0px;font-size:10px;color:#1e1e1e;font-weight:normal;">Features</div>
<svg style="left:363px;top:65.5px" width="4" height="7"><path d="M0 0 L3.5 3.5 L0 7 Z" fill="#444"/></svg>
<div class="t s" style="left:233.5px;top:80.5px;font-size:10px;color:#1e1e1e;font-weight:normal;">Pattern/Mirror</div>
<svg style="left:363px;top:83.0px" width="4" height="7"><path d="M0 0 L3.5 3.5 L0 7 Z" fill="#444"/></svg>
<div class="t s" style="left:233.5px;top:98.0px;font-size:10px;color:#1e1e1e;font-weight:normal;">Fastening Feature</div>
<svg style="left:363px;top:100.5px" width="4" height="7"><path d="M0 0 L3.5 3.5 L0 7 Z" fill="#444"/></svg>
<div class="t s" style="left:233.5px;top:115.5px;font-size:10px;color:#1e1e1e;font-weight:normal;">FeatureWorks</div>
<svg style="left:363px;top:118.0px" width="4" height="7"><path d="M0 0 L3.5 3.5 L0 7 Z" fill="#444"/></svg>
<div class="b" style="left:233px;top:133.5px;width:140px;height:1px;background:#d7d7d7;"></div>
<div class="t s" style="left:233.5px;top:140.0px;font-size:10px;color:#1e1e1e;font-weight:normal;">Surface</div>
<svg style="left:363px;top:142.5px" width="4" height="7"><path d="M0 0 L3.5 3.5 L0 7 Z" fill="#444"/></svg>
<div class="t s" style="left:233.5px;top:157.5px;font-size:10px;color:#1e1e1e;font-weight:normal;">Face</div>
<svg style="left:363px;top:160.0px" width="4" height="7"><path d="M0 0 L3.5 3.5 L0 7 Z" fill="#444"/></svg>
<div class="t s" style="left:233.5px;top:175.0px;font-size:10px;color:#1e1e1e;font-weight:normal;">Curve</div>
<svg style="left:363px;top:177.5px" width="4" height="7"><path d="M0 0 L3.5 3.5 L0 7 Z" fill="#444"/></svg>
<div class="t s" style="left:233.5px;top:192.5px;font-size:10px;color:#1e1e1e;font-weight:normal;">Reference Geometry</div>
<svg style="left:363px;top:195.0px" width="4" height="7"><path d="M0 0 L3.5 3.5 L0 7 Z" fill="#444"/></svg>
<div class="b" style="left:233px;top:211px;width:140px;height:1px;background:#d7d7d7;"></div>
<div class="t s" style="left:233.5px;top:217.5px;font-size:10px;color:#1e1e1e;font-weight:normal;">Sheet Metal</div>
<svg style="left:363px;top:220.0px" width="4" height="7"><path d="M0 0 L3.5 3.5 L0 7 Z" fill="#444"/></svg>
<div class="t s" style="left:233.5px;top:235.0px;font-size:10px;color:#1e1e1e;font-weight:normal;">Structure System</div>
<svg style="left:363px;top:237.5px" width="4" height="7"><path d="M0 0 L3.5 3.5 L0 7 Z" fill="#444"/></svg>
<div class="t s" style="left:233.5px;top:252.5px;font-size:10px;color:#1e1e1e;font-weight:normal;">Weldments</div>
<svg style="left:363px;top:255.0px" width="4" height="7"><path d="M0 0 L3.5 3.5 L0 7 Z" fill="#444"/></svg>
<div class="t s" style="left:233.5px;top:270.0px;font-size:10px;color:#1e1e1e;font-weight:normal;">Molds</div>
<svg style="left:363px;top:272.5px" width="4" height="7"><path d="M0 0 L3.5 3.5 L0 7 Z" fill="#444"/></svg>
<div class="b" style="left:233px;top:288.5px;width:140px;height:1px;background:#d7d7d7;"></div>
<div class="t s" style="left:233.5px;top:295.0px;font-size:10px;color:#1e1e1e;font-weight:normal;">Exploded View...</div>
<div class="t s" style="left:233.5px;top:312.5px;font-size:10px;color:#a9a9a9;font-weight:normal;">Explode Line Sketch</div>
<div class="t s" style="left:233.5px;top:330.0px;font-size:10px;color:#1e1e1e;font-weight:normal;">Model Break View...</div>
<div class="t s" style="left:233.5px;top:347.5px;font-size:10px;color:#1e1e1e;font-weight:normal;">Part...</div>
<div class="b" style="left:211px;top:363px;width:162px;height:16.5px;background:#ffffff;border:1px solid #c5c5c5;"></div>
<div class="t s" style="left:233.5px;top:365.0px;font-size:10px;color:#1e1e1e;font-weight:normal;">Mirror Part...</div>
<div class="b" style="left:233px;top:383.5px;width:140px;height:1px;background:#d7d7d7;"></div>
<div class="t s" style="left:233.5px;top:390.0px;font-size:10px;color:#1e1e1e;font-weight:normal;">Sketch</div>
<div class="t s" style="left:233.5px;top:407.5px;font-size:10px;color:#1e1e1e;font-weight:normal;">3D Sketch</div>
<div class="t s" style="left:233.5px;top:425.0px;font-size:10px;color:#1e1e1e;font-weight:normal;">3D Sketch On Plane</div>
<div class="t s" style="left:233.5px;top:442.5px;font-size:10px;color:#a9a9a9;font-weight:normal;">Derived Sketch</div>
<div class="t s" style="left:233.5px;top:460.0px;font-size:10px;color:#a9a9a9;font-weight:normal;">Sketch From Drawing</div>
<div class="t s" style="left:233.5px;top:477.5px;font-size:10px;color:#1e1e1e;font-weight:normal;">Slicing...</div>
<div class="t s" style="left:233.5px;top:495.0px;font-size:10px;color:#1e1e1e;font-weight:normal;">DXF/DWG...</div>
<div class="t s" style="left:233.5px;top:512.5px;font-size:10px;color:#1e1e1e;font-weight:normal;">Design Study</div>
<svg style="left:363px;top:515.0px" width="4" height="7"><path d="M0 0 L3.5 3.5 L0 7 Z" fill="#444"/></svg>
<div class="b" style="left:233px;top:531px;width:140px;height:1px;background:#d7d7d7;"></div>
<div class="t s" style="left:233.5px;top:537.5px;font-size:10px;color:#1e1e1e;font-weight:normal;">Tables</div>
<svg style="left:363px;top:540.0px" width="4" height="7"><path d="M0 0 L3.5 3.5 L0 7 Z" fill="#444"/></svg>
<div class="t s" style="left:233.5px;top:555.0px;font-size:10px;color:#1e1e1e;font-weight:normal;">Annotations</div>
<svg style="left:363px;top:557.5px" width="4" height="7"><path d="M0 0 L3.5 3.5 L0 7 Z" fill="#444"/></svg>
<div class="b" style="left:233px;top:573.5px;width:140px;height:1px;background:#d7d7d7;"></div>
<div class="t s" style="left:233.5px;top:580.0px;font-size:10px;color:#1e1e1e;font-weight:normal;">Object...</div>
<svg style="left:214px;top:294px" width="16" height="14" viewBox="0 0 16 14"><g transform="translate(0,3) scale(0.7)"><path d="M1.5 6.8 L4.2 2.2 Q5.5 0.6 7.6 1.4 L9.8 2.8 L10.2 5.6 L14.6 8 L15 10.2 L10.8 14 L8.6 14.2 L1.6 9.6 Z" fill="#f4c41c" stroke="#5e4300" stroke-width="1.1" stroke-linejoin="round"/><path d="M1.5 6.8 L8.6 11 L14.8 8.6 M8.6 11 V14.2 M4.2 2.2 L7 4.2 L10 5.8 M7 4.2 L6 7.8" stroke="#5e4300" stroke-width="0.8" fill="none"/><path d="M5.5 2.2 L8.5 3.8" stroke="#fff4a0" stroke-width="1"/></g><path d="M10 6 L13 3" stroke="#2f74b5"/><rect x="12" y="0.5" width="3.5" height="3" fill="#2f74b5"/></svg>
<svg style="left:214px;top:311px" width="16" height="14" viewBox="0 0 16 14"><circle cx="5" cy="9" r="4" fill="#e4e4e4" stroke="#cfcfcf"/><rect x="11" y="1" width="4" height="3" fill="#d8d8d8"/></svg>
<svg style="left:214.5px;top:329px" width="15" height="14" viewBox="0 0 15 14"><path d="M4.5 1 H1 V13 H4.5 M10.5 1 H14 V13 H10.5" stroke="#333" stroke-width="1.1" fill="none"/><path d="M5.5 1 V5 L9.5 7 V13 M3.5 7 H11.5" stroke="#555" stroke-width="1" stroke-dasharray="1.6 1" fill="none"/></svg>
<svg style="left:213px;top:345.5px" width="18" height="16" viewBox="0 0 18 16"><path d="M1 6 Q1 4.5 2.5 4.5 H6 L7 3.5 H10 V13.5 Q10 15 8.5 15 H2.5 Q1 15 1 13.5 Z" fill="#fafafa" stroke="#444" stroke-width="0.9"/><path d="M2 11 Q4 9 8 11" stroke="#4a7a3a" stroke-width="1.3" fill="none"/><rect x="1.5" y="5" width="2" height="2" fill="#2a8a3a"/><g transform="translate(5,0) scale(0.8)"><path d="M1.5 6.8 L4.2 2.2 Q5.5 0.6 7.6 1.4 L9.8 2.8 L10.2 5.6 L14.6 8 L15 10.2 L10.8 14 L8.6 14.2 L1.6 9.6 Z" fill="#f4c41c" stroke="#5e4300" stroke-width="1.1" stroke-linejoin="round"/><path d="M1.5 6.8 L8.6 11 L14.8 8.6 M8.6 11 V14.2 M4.2 2.2 L7 4.2 L10 5.8 M7 4.2 L6 7.8" stroke="#5e4300" stroke-width="0.8" fill="none"/><path d="M5.5 2.2 L8.5 3.8" stroke="#fff4a0" stroke-width="1"/></g></svg>
<svg style="left:214px;top:389px" width="14" height="14" viewBox="0 0 14 14"><path d="M10.5 1.2 H3.5 Q1.3 1.2 1.3 3.5 V10 Q1.3 12.5 3.5 12.5 H12.5" stroke="#3a5570" stroke-width="1.5" fill="none"/></svg>
<svg style="left:214px;top:406.5px" width="15" height="14" viewBox="0 0 15 14"><path d="M10.5 1.2 H3.5 Q1.3 1.2 1.3 3.5 V10 Q1.3 12.5 3.5 12.5 H12.5" stroke="#3a5570" stroke-width="1.5" fill="none"/><text x="3.2" y="10.6" font-size="7" font-family="Liberation Sans" font-weight="bold" fill="#1e1e1e">3D</text></svg>
<svg style="left:214px;top:424px" width="16" height="15" viewBox="0 0 16 15"><path d="M5 2 L10 1 V10 L5 11 Z" fill="#c8d8e4" stroke="#3a5570" stroke-width="0.9"/><path d="M8 1.2 H3 Q1.3 1.2 1.3 3 V11 Q1.3 12.5 3 12.5 H8" stroke="#3a5570" stroke-width="1.4" fill="none"/><text x="8.5" y="14" font-size="5.5" font-family="Liberation Sans" font-weight="bold" fill="#1e1e1e">3D</text></svg>
<svg style="left:214px;top:476px" width="15" height="15" viewBox="0 0 15 15"><path d="M1.5 4 L7.5 1.5 L13.5 4 V11 L7.5 13.8 L1.5 11 Z" fill="#9ab4cc" stroke="#3a4a5a" stroke-width="0.9"/><path d="M1.5 4 L7.5 6.5 L13.5 4 M1.5 6.5 L7.5 9 L13.5 6.5 M1.5 9 L7.5 11.5 L13.5 9" stroke="#3a4a5a" stroke-width="0.8" fill="none"/><path d="M3 4 L7.5 2.5 L12 4 L7.5 5.5 Z" fill="#d8e6f2"/></svg>
<svg style="left:358px;top:476px" width="14" height="14" viewBox="0 0 14 14"><circle cx="6.5" cy="7.5" r="5.5" fill="#fafafa" stroke="#333"/><text x="4" y="10.5" font-size="8" font-family="Liberation Sans" font-weight="bold" fill="#222">?</text><circle cx="11.5" cy="2.5" r="2" fill="#f0b020"/></svg>
<svg style="left:268.8px;top:367.4px" width="10.5" height="15" viewBox="0 0 12 17"><path d="M1 1 V13 L4 10.2 L6.3 15.5 L8.3 14.6 L6.1 9.5 L10 9.5 Z" fill="#fff" stroke="#111" stroke-width="1" stroke-linejoin="round"/></svg>
<svg style="left:654px;top:90px" width="15" height="15" viewBox="0 0 15 15"><circle cx="9" cy="6" r="4.6" fill="#fafafa" stroke="#6a6a6a" stroke-width="1.4"/><path d="M5.6 9.4 L1.8 13.2" stroke="#6f7a84" stroke-width="2.4" stroke-linecap="round"/><circle cx="7.5" cy="5" r="0.9" fill="#555"/><circle cx="10.5" cy="7" r="0.9" fill="#555"/><circle cx="9" cy="6" r="0.8" fill="#333"/></svg>
<svg style="left:673px;top:90px" width="15" height="15" viewBox="0 0 15 15"><circle cx="8.5" cy="6.5" r="4.3" fill="#f0f0f0" stroke="#8a8a8a" stroke-width="1.3"/><path d="M5.4 9.6 L1.8 13.2" stroke="#6f7a84" stroke-width="2.4" stroke-linecap="round"/><path d="M4 1 H2 V3 M12 1 H14 V3 M14 10 V12 H12" stroke="#777" stroke-width="1.1" fill="none"/></svg>
<svg style="left:692px;top:90px" width="15" height="15" viewBox="0 0 15 15"><path d="M1.5 12 L4 8 L11 1.5 L13.5 3 L7 10 L2.5 13 Z" fill="#e0e0e0" stroke="#8a8a8a" stroke-width="1"/><path d="M5 7 L10 2.5" stroke="#fff" stroke-width="0.8"/><path d="M7 10 H13 M8.5 8 L6.5 10 L8.5 12" stroke="#4a7ca8" stroke-width="1.3" fill="none"/></svg>
<svg style="left:711px;top:90px" width="15" height="15" viewBox="0 0 15 15"><path d="M1 4 L5 1.5 H14 V11.5 L10 14 H1 Z" fill="#f2f2f2" stroke="#555" stroke-width="0.9"/><path d="M1 4 H10 V14 M10 4 L14 1.5" stroke="#555" stroke-width="0.7" fill="none"/><path d="M1.5 4.5 H6 V13.5 H1.5 Z" fill="#4a84b8"/><path d="M10.5 4.5 L13.5 2.5 V11 L10.5 13.5 Z" fill="#6e94b8"/></svg>
<svg style="left:730px;top:90px" width="15" height="15" viewBox="0 0 15 15"><path d="M1.5 13 L12 2.5" stroke="#8a8a8a" stroke-width="2.2"/><path d="M3 10 L12 5" stroke="#e8b830" stroke-width="2.4"/><path d="M8 6 L10.5 13 M10.5 13 L13.5 8" stroke="#6a7a88" stroke-width="1.3" fill="none"/><path d="M4 3 L7 2" stroke="#e8c040" stroke-width="2"/></svg>
<svg style="left:749px;top:90px" width="15" height="15" viewBox="0 0 15 15"><path d="M1 4 L5 1.5 H14 V11 L10 14 H1 Z" fill="#8ec0e8" stroke="#4a5a6a" stroke-width="0.9"/><path d="M1 4 H10 V14 M10 4 L14 1.5" stroke="#4a5a6a" stroke-width="0.8" fill="none"/><path d="M10.5 4.5 L13.5 2.5 V11 L10.5 13.5 Z" fill="#f0f0f0"/><path d="M11 6 L13 8 M11 10 L13 12" stroke="#555" stroke-width="0.7"/></svg>
<svg style="left:767px;top:96.5px" width="5" height="3"><path d="M0 0 H5 L2.5 3 Z" fill="#888"/></svg>
<svg style="left:778px;top:90px" width="15" height="15" viewBox="0 0 15 15"><path d="M1.5 3.5 L7 1 L13.5 3 V12 L8 14.5 L1.5 12 Z" fill="#a8d0ee" stroke="#4a5a6a" stroke-width="0.9"/><path d="M1.5 3.5 L8 5.5 L13.5 3 M8 5.5 V14.5" stroke="#4a5a6a" stroke-width="0.8" fill="none"/><path d="M9 6.5 L12.5 4.8 V11 L9 13 Z" fill="#e6f2fa"/></svg>
<svg style="left:797px;top:96.5px" width="5" height="3"><path d="M0 0 H5 L2.5 3 Z" fill="#888"/></svg>
<svg style="left:807px;top:90px" width="15" height="15" viewBox="0 0 15 15"><path d="M1 7.5 C4 3 11 3 14 7.5 C11 12 4 12 1 7.5 Z" fill="#dcdcdc" stroke="#8a8a8a" stroke-width="0.9"/><circle cx="7.5" cy="7.5" r="2.6" fill="#555"/><path d="M7.5 2 V13" stroke="#777" stroke-width="0.9"/></svg>
<svg style="left:826px;top:96.5px" width="5" height="3"><path d="M0 0 H5 L2.5 3 Z" fill="#888"/></svg>
<svg style="left:836px;top:90px" width="15" height="15" viewBox="0 0 15 15"><circle cx="7" cy="7" r="6" fill="#43a047"/><path d="M7 7 L1 7 A6 6 0 0 1 7 1 Z" fill="#4a7fd0"/><path d="M7 7 L7 1 A6 6 0 0 1 13 7 Z" fill="#e04848"/><path d="M7 7 L13 7 A6 6 0 0 1 9 12.6 Z" fill="#f2d04a"/><path d="M8 13.5 L14 6.5" stroke="#8a5a30" stroke-width="2"/><path d="M8.5 13 L13.5 7" stroke="#f0d080" stroke-width="0.9"/></svg>
<svg style="left:854px;top:90px" width="15" height="15" viewBox="0 0 15 15"><circle cx="7.5" cy="6" r="5.5" fill="#43a047"/><path d="M7.5 6 L2 6 A5.5 5.5 0 0 1 7.5 0.5 Z" fill="#4a7fd0"/><path d="M7.5 6 L7.5 0.5 A5.5 5.5 0 0 1 13 6 Z" fill="#e04848"/><rect x="1" y="10" width="13" height="4.5" fill="#222"/><path d="M1.5 12.2 H14" stroke="#eee" stroke-dasharray="2 2" stroke-width="1.6"/><path d="M9 11 L13 5" stroke="#f2d04a" stroke-width="1.6"/></svg>
<svg style="left:874px;top:96.5px" width="5" height="3"><path d="M0 0 H5 L2.5 3 Z" fill="#888"/></svg>
<svg style="left:885px;top:90px" width="15" height="15" viewBox="0 0 15 15"><rect x="0.8" y="1.5" width="13.4" height="9" fill="#d8d8d8" stroke="#707070" stroke-width="1.1"/><path d="M7.5 10.5 V12.5 M4 13.2 H11" stroke="#555" stroke-width="1.3"/></svg>
<svg style="left:903px;top:96.5px" width="5" height="3"><path d="M0 0 H5 L2.5 3 Z" fill="#888"/></svg>
<svg style="left:1303px;top:91px" width="100" height="12"><rect x="0.5" y="0.5" width="9" height="11" fill="none" stroke="#b0b0b0"/><path d="M6 3.5 L3.5 6 L6 8.5" fill="#999"/><rect x="20.5" y="0.5" width="9" height="11" fill="none" stroke="#b0b0b0"/><path d="M24 3.5 L26.5 6 L24 8.5" fill="#999"/><rect x="40" y="8" width="7" height="2" fill="#aaa"/><rect x="61.5" y="1.5" width="7" height="6" fill="none" stroke="#aaa"/><rect x="59.5" y="3.5" width="7" height="6" fill="#fff" stroke="#aaa"/><path d="M78 1 L86 9 M86 1 L78 9" stroke="#aaa" stroke-width="1.1"/></svg>
<div class="b" style="left:1381.5px;top:123px;width:19px;height:106px;background:#e4e4e4;border:1px solid #b5b5b5;border-right:none;"></div>
<div class="b" style="left:1382.5px;top:124.0px;width:18px;height:16.5px;background:#fdfdfd;border-bottom:1px solid #b9b9b9;"></div>
<div class="b" style="left:1382.5px;top:141.5px;width:18px;height:16.5px;background:#dcdcdc;border-bottom:1px solid #b9b9b9;"></div>
<div class="b" style="left:1382.5px;top:159.0px;width:18px;height:16.5px;background:#dcdcdc;border-bottom:1px solid #b9b9b9;"></div>
<div class="b" style="left:1382.5px;top:176.5px;width:18px;height:16.5px;background:#dcdcdc;border-bottom:1px solid #b9b9b9;"></div>
<div class="b" style="left:1382.5px;top:194.0px;width:18px;height:16.5px;background:#dcdcdc;border-bottom:1px solid #b9b9b9;"></div>
<div class="b" style="left:1382.5px;top:211.5px;width:18px;height:16.5px;background:#dcdcdc;border-bottom:1px solid #b9b9b9;"></div>
<svg style="left:1384px;top:124.5px" width="15" height="15" viewBox="0 0 15 15"><path d="M1.5 7 L7.5 1.5 L13.5 7" stroke="#2a5d8f" stroke-width="1.8" fill="none"/><path d="M3.5 6.5 V13 H11.5 V6.5" stroke="#2a5d8f" stroke-width="1.3" fill="#fff"/><rect x="6" y="9" width="3" height="4" fill="#2a5d8f"/></svg>
<svg style="left:1384px;top:142.0px" width="15" height="15" viewBox="0 0 15 15"><path d="M2 3 L8 1 L13 3 V12 L8 14 L2 12 Z" fill="#e6e6e6" stroke="#444"/><path d="M5 2 V13 M8 1 V14 M11 2 V13" stroke="#444" stroke-width="0.7"/></svg>
<svg style="left:1384px;top:159.5px" width="15" height="15" viewBox="0 0 15 15"><path d="M1 2.5 H5 L6 1.5 H11 V4 H1 Z" fill="#f4f4f4" stroke="#444" stroke-width="0.8"/><path d="M1 13.5 L3 5 H14 L12 13.5 Z" fill="#f4f4f4" stroke="#444" stroke-width="0.8"/></svg>
<svg style="left:1384px;top:177.0px" width="15" height="15" viewBox="0 0 15 15"><rect x="1" y="2" width="13" height="11" fill="#e8c040" stroke="#555" stroke-width="0.8"/><path d="M2 12 L6 7 L9 10 L13 5" stroke="#333" fill="none"/><circle cx="10" cy="5" r="1.5" fill="#fff"/></svg>
<svg style="left:1384px;top:194.5px" width="15" height="15" viewBox="0 0 15 15"><circle cx="7.5" cy="7.5" r="6" fill="#3aa040"/><path d="M7.5 7.5 L7.5 1.5 A6 6 0 0 1 13.5 7.5 Z" fill="#e04030"/><path d="M7.5 7.5 L1.5 7.5 A6 6 0 0 1 7.5 1.5 Z" fill="#3b7cb7"/><path d="M7.5 7.5 L13.5 7.5 A6 6 0 0 1 7.5 13.5 Z" fill="#f0b020"/></svg>
<svg style="left:1384px;top:212.0px" width="15" height="15" viewBox="0 0 15 15"><rect x="1" y="1.5" width="13" height="12" fill="#e6edf4" stroke="#36587a"/><rect x="1" y="1.5" width="13" height="3" fill="#36587a"/><path d="M3 7 H5 M3 9.5 H5 M3 12 H5" stroke="#36587a" stroke-width="1.4"/><path d="M6.5 7 H12 M6.5 9.5 H12 M6.5 12 H12" stroke="#36587a"/></svg>
<svg style="left:0;top:0" width="1400" height="595" viewBox="0 0 1400 595">
<defs>
 <filter id="blur3" x="-10%" y="-10%" width="120%" height="120%"><feGaussianBlur stdDeviation="3"/></filter>
 <filter id="blur1"><feGaussianBlur stdDeviation="1"/></filter>
 <clipPath id="faceclip"><path d="M591.5 453 L713.8 312.4 L931 235.3 L1087.3 215.5 L1088.5 580 Q1088 588.5 1080 589 L985 597 L593.5 597 L593 455 Z"/></clipPath>
 <linearGradient id="fs1" x1="0" y1="0" x2="1" y2="1"><stop offset="0" stop-color="#6c6668"/><stop offset="0.5" stop-color="#d6d6e4"/><stop offset="1" stop-color="#c8ccdc"/></linearGradient>
 <linearGradient id="fillv" x1="0" y1="0" x2="1" y2="0"><stop offset="0" stop-color="#5e5a5a"/><stop offset="0.45" stop-color="#8a8890"/><stop offset="1" stop-color="#b8bed4"/></linearGradient>
 <linearGradient id="redge" x1="0" y1="0" x2="1" y2="0"><stop offset="0" stop-color="#9ae8ff"/><stop offset="0.4" stop-color="#8fa8c4"/><stop offset="1" stop-color="#6a7488"/></linearGradient>
 <linearGradient id="bandA" gradientUnits="userSpaceOnUse" x1="646" y1="377.5" x2="650.6" y2="381.3"><stop offset="0" stop-color="#767072"/><stop offset="0.3" stop-color="#b0acb6"/><stop offset="0.65" stop-color="#e8eaf6"/><stop offset="1" stop-color="#b0e8ff"/></linearGradient>
 <linearGradient id="bandB" gradientUnits="userSpaceOnUse" x1="814.6" y1="265.7" x2="818" y2="275.1"><stop offset="0" stop-color="#767072"/><stop offset="0.3" stop-color="#b0acb6"/><stop offset="0.65" stop-color="#e8eaf6"/><stop offset="1" stop-color="#b0e8ff"/></linearGradient>
 <linearGradient id="bandC" gradientUnits="userSpaceOnUse" x1="1002.5" y1="216.3" x2="1003.7" y2="225.7"><stop offset="0" stop-color="#767072"/><stop offset="0.3" stop-color="#b0acb6"/><stop offset="0.65" stop-color="#e8eaf6"/><stop offset="1" stop-color="#b0e8ff"/></linearGradient>
 <linearGradient id="strip1" x1="0" y1="0" x2="1" y2="0"><stop offset="0" stop-color="#7a7270"/><stop offset="0.5" stop-color="#9a9290"/><stop offset="1" stop-color="#857d7b"/></linearGradient>
</defs>
<!-- lower part -->
<path d="M449 595 L449 500 C449 470 458 457 478 457 L502 461 L514 461 L545 457 L550 457.5 L590 465 L594 466 L594 595 Z" fill="#58534f"/>
<rect x="502" y="460" width="12" height="135" fill="url(#strip1)"/>
<path d="M514 461 L545 457 L545 595 L514 595 Z" fill="#726a68"/>
<rect x="545" y="457" width="4" height="138" fill="#968e8c"/>
<path d="M549 457.5 L583 463.5 L583 595 L549 595 Z" fill="#5d5755"/>
<path d="M583 463.5 L590 465 L594 466 L594 595 L583 595 Z" fill="url(#fillv)"/>
<path d="M453 595 C449 585 448.5 570 448.5 540 L449 500 C449 470 458 457 478 457 L502 461 L514 461 L545 457 L550 457.5 L590 465" fill="none" stroke="#151515" stroke-width="1.3"/>
<path d="M502 461 V595 M514 461 V595 M545 457 V595 M549 457.5 V595 M583 463.5 V595" stroke="#1e1a1a" stroke-width="1"/>
<!-- blue face -->
<path d="M591.5 453 L713.8 312.4 L931 235.3 L1087.3 215.5 L1088.5 580 Q1088 588.5 1080 589 L985 597 L593.5 597 L593 455 Z" fill="#00a9fb"/>
<g clip-path="url(#faceclip)">
 <path d="M591.5 453 L713.8 312.4 L931 235.3 L1087.3 215.5 L1088.5 580 Q1088 588.5 1080 589 L985 597 L593.5 597 L593 455 Z" fill="none" stroke="#14dcff" stroke-width="16" filter="url(#blur3)"/>
</g>
<path d="M1085.5 216 L1089 215.5 L1089.2 581 L1085.8 586 Z" fill="url(#redge)"/>
<path d="M1089 216 L1089.2 581" stroke="#556070" stroke-width="0.9"/>
<path d="M985 597 L1080 589.5 Q1088.5 589 1089 580" stroke="#505866" stroke-width="1.8" fill="none"/>
<!-- fillet band along bend -->
<path d="M586.2 450.2 L705.7 304.7 L713.8 312.4 L591.5 453 Z" fill="url(#bandA)"/>
<path d="M705.7 304.7 L923.5 226.7 L931 235.3 L713.8 312.4 Z" fill="url(#bandB)"/>
<path d="M923.5 226.7 L1081.6 206 L1087.3 215.5 L931 235.3 Z" fill="url(#bandC)"/>
<path d="M705.7 304.7 Q710 306 713.8 312.4 L709 309 Z" fill="#9a98a4"/>
<path d="M1081.6 206 Q1089 207 1089 216 L1085 216 Z" fill="#8e8a96"/>
<path d="M1081.6 206 Q1089 207 1089 216" stroke="#333" stroke-width="1.2" fill="none"/>
<!-- flange -->
<path d="M522.7 435.5 L643.6 291.9 L862.3 213.4 L1020.5 192.3 L1081.6 206 L923.5 226.7 L705.7 304.7 L586.2 450.2 L522.7 437.5 Z" fill="#766e6c" stroke="#1c1818" stroke-width="1.2" stroke-linejoin="round"/>
<path d="M643.6 291.9 L705.7 304.7 M862.3 213.4 L923.5 226.7" stroke="#1c1818" stroke-width="1.6"/>
<path d="M705.7 304.7 L713.8 312.4 M923.5 226.7 Q929 229 931 235.3" stroke="#1c2430" stroke-width="1.4" fill="none"/>
<path d="M522.7 437.5 L586.2 450.2 L592 453" stroke="#1c1818" stroke-width="1.6" fill="none"/>
<path d="M592.5 453.5 L592.5 466" stroke="#2a3038" stroke-width="1.2"/>
</svg>
<svg style="left:0;top:595px" width="1400" height="193" viewBox="0 595 1400 193">
<defs>
 <clipPath id="redclip"><rect x="1207" y="595" width="193" height="193"/></clipPath>
 <path id="S" d="M1344.5 642 L1296 642 C1276 642 1267.5 652 1267.5 668 C1267.5 680 1273 688 1283 695 L1312 714.5 C1316 717.5 1316 723 1311 723 L1268 723 C1264 723 1262 726 1262 729 L1262 740 C1262 742.5 1264 744 1266.5 744 L1314 744 C1330 744 1338 735 1338 718 C1338 706 1332 698 1322 691 L1294 672 C1290 669 1290 663 1295 663 L1338 663 C1341 663 1342.5 661 1343 659 L1345.5 646 C1346 643.5 1345.5 642 1344.5 642 Z"/>
</defs>
<rect x="0" y="595" width="1400" height="193" fill="#206596"/>
<path d="M0 595 L353.5 595 L549.5 788 L0 788 Z" fill="#0d4e7e"/>
<rect x="1207" y="595" width="193" height="193" fill="#dc281e"/>
<g clip-path="url(#redclip)" fill="#ae1f18">
<use href="#S" x="1" y="1" stroke="#ae1f18" stroke-width="2"/>
<use href="#S" x="3" y="3" stroke="#ae1f18" stroke-width="2"/>
<use href="#S" x="5" y="5" stroke="#ae1f18" stroke-width="2"/>
<use href="#S" x="7" y="7" stroke="#ae1f18" stroke-width="2"/>
<use href="#S" x="9" y="9" stroke="#ae1f18" stroke-width="2"/>
<use href="#S" x="11" y="11" stroke="#ae1f18" stroke-width="2"/>
<use href="#S" x="13" y="13" stroke="#ae1f18" stroke-width="2"/>
<use href="#S" x="15" y="15" stroke="#ae1f18" stroke-width="2"/>
<use href="#S" x="17" y="17" stroke="#ae1f18" stroke-width="2"/>
<use href="#S" x="19" y="19" stroke="#ae1f18" stroke-width="2"/>
<use href="#S" x="21" y="21" stroke="#ae1f18" stroke-width="2"/>
<use href="#S" x="23" y="23" stroke="#ae1f18" stroke-width="2"/>
<use href="#S" x="25" y="25" stroke="#ae1f18" stroke-width="2"/>
<use href="#S" x="27" y="27" stroke="#ae1f18" stroke-width="2"/>
<use href="#S" x="29" y="29" stroke="#ae1f18" stroke-width="2"/>
<use href="#S" x="31" y="31" stroke="#ae1f18" stroke-width="2"/>
<use href="#S" x="33" y="33" stroke="#ae1f18" stroke-width="2"/>
<use href="#S" x="35" y="35" stroke="#ae1f18" stroke-width="2"/>
<use href="#S" x="37" y="37" stroke="#ae1f18" stroke-width="2"/>
<use href="#S" x="39" y="39" stroke="#ae1f18" stroke-width="2"/>
<use href="#S" x="41" y="41" stroke="#ae1f18" stroke-width="2"/>
<use href="#S" x="43" y="43" stroke="#ae1f18" stroke-width="2"/>
<use href="#S" x="45" y="45" stroke="#ae1f18" stroke-width="2"/>
<use href="#S" x="47" y="47" stroke="#ae1f18" stroke-width="2"/>
<use href="#S" x="49" y="49" stroke="#ae1f18" stroke-width="2"/>
<use href="#S" x="51" y="51" stroke="#ae1f18" stroke-width="2"/>
<use href="#S" x="53" y="53" stroke="#ae1f18" stroke-width="2"/>
<use href="#S" x="55" y="55" stroke="#ae1f18" stroke-width="2"/>
<use href="#S" x="57" y="57" stroke="#ae1f18" stroke-width="2"/>
<use href="#S" x="59" y="59" stroke="#ae1f18" stroke-width="2"/>
<use href="#S" x="61" y="61" stroke="#ae1f18" stroke-width="2"/>
<use href="#S" x="63" y="63" stroke="#ae1f18" stroke-width="2"/>
<use href="#S" x="65" y="65" stroke="#ae1f18" stroke-width="2"/>
<use href="#S" x="67" y="67" stroke="#ae1f18" stroke-width="2"/>
<use href="#S" x="69" y="69" stroke="#ae1f18" stroke-width="2"/>
<use href="#S" x="71" y="71" stroke="#ae1f18" stroke-width="2"/>
<use href="#S" x="73" y="73" stroke="#ae1f18" stroke-width="2"/>
<use href="#S" x="75" y="75" stroke="#ae1f18" stroke-width="2"/>
<use href="#S" x="77" y="77" stroke="#ae1f18" stroke-width="2"/>
<use href="#S" x="79" y="79" stroke="#ae1f18" stroke-width="2"/>
<use href="#S" x="81" y="81" stroke="#ae1f18" stroke-width="2"/>
<use href="#S" x="83" y="83" stroke="#ae1f18" stroke-width="2"/>
<use href="#S" x="85" y="85" stroke="#ae1f18" stroke-width="2"/>
<use href="#S" x="87" y="87" stroke="#ae1f18" stroke-width="2"/>
<use href="#S" x="89" y="89" stroke="#ae1f18" stroke-width="2"/>
<use href="#S" x="91" y="91" stroke="#ae1f18" stroke-width="2"/>
<use href="#S" x="93" y="93" stroke="#ae1f18" stroke-width="2"/>
<use href="#S" x="95" y="95" stroke="#ae1f18" stroke-width="2"/>
<use href="#S" x="97" y="97" stroke="#ae1f18" stroke-width="2"/>
<use href="#S" x="99" y="99" stroke="#ae1f18" stroke-width="2"/>
<use href="#S" x="101" y="101" stroke="#ae1f18" stroke-width="2"/>
<use href="#S" x="103" y="103" stroke="#ae1f18" stroke-width="2"/>
<use href="#S" x="105" y="105" stroke="#ae1f18" stroke-width="2"/>
<use href="#S" x="107" y="107" stroke="#ae1f18" stroke-width="2"/>
<use href="#S" x="109" y="109" stroke="#ae1f18" stroke-width="2"/>
<use href="#S" x="111" y="111" stroke="#ae1f18" stroke-width="2"/>
<use href="#S" x="113" y="113" stroke="#ae1f18" stroke-width="2"/>
<use href="#S" x="115" y="115" stroke="#ae1f18" stroke-width="2"/>
<use href="#S" x="117" y="117" stroke="#ae1f18" stroke-width="2"/>
<use href="#S" x="119" y="119" stroke="#ae1f18" stroke-width="2"/>
<use href="#S" x="121" y="121" stroke="#ae1f18" stroke-width="2"/>
<use href="#S" x="123" y="123" stroke="#ae1f18" stroke-width="2"/>
<use href="#S" x="125" y="125" stroke="#ae1f18" stroke-width="2"/>
<use href="#S" x="127" y="127" stroke="#ae1f18" stroke-width="2"/>
<use href="#S" x="129" y="129" stroke="#ae1f18" stroke-width="2"/>
<use href="#S" x="131" y="131" stroke="#ae1f18" stroke-width="2"/>
<use href="#S" x="133" y="133" stroke="#ae1f18" stroke-width="2"/>
<use href="#S" x="135" y="135" stroke="#ae1f18" stroke-width="2"/>
<use href="#S" x="137" y="137" stroke="#ae1f18" stroke-width="2"/>
<use href="#S" x="139" y="139" stroke="#ae1f18" stroke-width="2"/>
<use href="#S" x="141" y="141" stroke="#ae1f18" stroke-width="2"/>
<use href="#S" x="143" y="143" stroke="#ae1f18" stroke-width="2"/>
<use href="#S" x="145" y="145" stroke="#ae1f18" stroke-width="2"/>
<use href="#S" x="147" y="147" stroke="#ae1f18" stroke-width="2"/>
<use href="#S" x="149" y="149" stroke="#ae1f18" stroke-width="2"/>
<use href="#S" x="151" y="151" stroke="#ae1f18" stroke-width="2"/>
<use href="#S" x="153" y="153" stroke="#ae1f18" stroke-width="2"/>
<use href="#S" x="155" y="155" stroke="#ae1f18" stroke-width="2"/>
<use href="#S" x="157" y="157" stroke="#ae1f18" stroke-width="2"/>
<use href="#S" x="159" y="159" stroke="#ae1f18" stroke-width="2"/>
</g>
<use href="#S" fill="#ffffff"/>
<rect x="0" y="595" width="1400" height="1.2" fill="rgba(0,0,0,0.14)"/>
</svg>
<div class="t" style="left:84.2px;top:610.6px;height:69px;line-height:69px;font-size:69px;font-weight:normal;color:#fff;letter-spacing:1.0px;-webkit-text-stroke:2.2px #fff;">How to Create a</div>
<div class="t" style="left:82.1px;top:692.7px;height:78px;line-height:78px;font-size:78px;font-weight:bold;color:#fff;letter-spacing:-2.2px;-webkit-text-stroke:0;">MIRRORED PART</div>
</body></html>
